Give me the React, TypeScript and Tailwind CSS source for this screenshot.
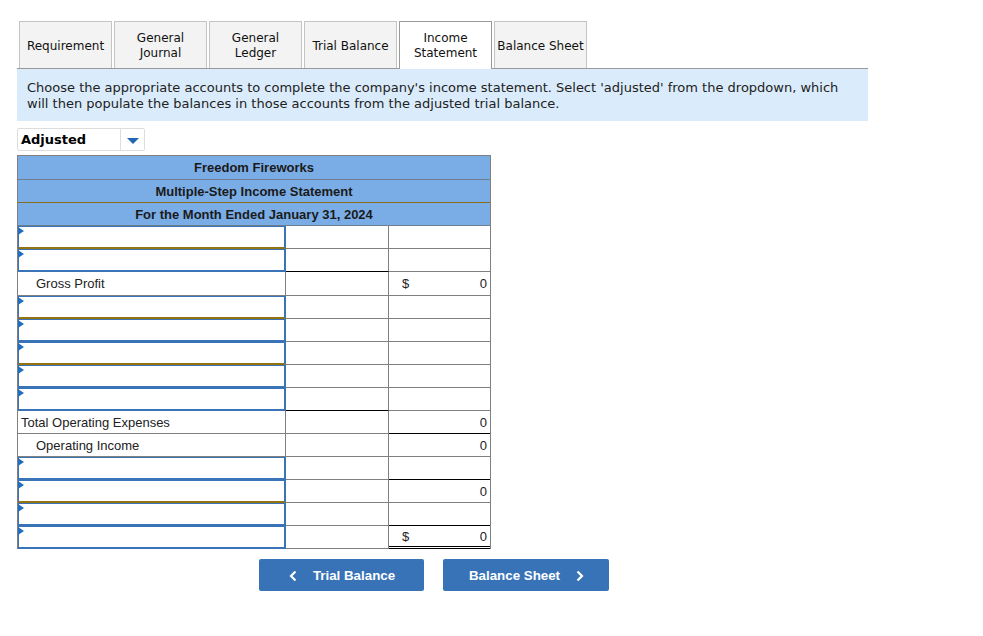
const tabs: [string, string?][] = [["Requirement"], ["General", "Journal"], ["General", "Ledger"], ["Trial Balance"], ["Income", "Statement"], ["Balance Sheet"]];

type Row = { h: string; label?: string; indent?: boolean; input?: boolean; gold?: boolean; midTop?: boolean; rightTop?: boolean; dollar?: boolean; zero?: boolean; last?: boolean };

const rows: Row[] = [
  { h: "h-[23px]", input: true, gold: true },
  { h: "h-[23px]", input: true },
  { h: "h-[24px]", label: "Gross Profit", indent: true, midTop: true, dollar: true, zero: true },
  { h: "h-[23px]", input: true, gold: true },
  { h: "h-[23px]", input: true },
  { h: "h-[23px]", input: true, gold: true },
  { h: "h-[23px]", input: true },
  { h: "h-[23px]", input: true },
  { h: "h-[23px]", label: "Total Operating Expenses", midTop: true, zero: true },
  { h: "h-[23px]", label: "Operating Income", indent: true, rightTop: true, zero: true },
  { h: "h-[23px]", input: true },
  { h: "h-[23px]", input: true, gold: true, rightTop: true, zero: true },
  { h: "h-[23px]", input: true },
  { h: "h-[23px]", input: true, rightTop: true, dollar: true, zero: true, last: true },
];

function Tab({ lines, active }: { lines: [string, string?]; active: boolean }) {
  return (
    <div className={active
      ? "w-[93px] h-[48px] pt-px -mb-px z-10 bg-white border border-b-0 border-[#999999] flex flex-col items-center justify-center leading-[15px]"
      : "w-[93px] h-[47px] pt-[2px] bg-[#f3f3f3] border border-b-0 border-[#c4c4c4] flex flex-col items-center justify-center leading-[15px]"}>
      {lines.map((l) => <span key={l} className="whitespace-nowrap">{l}</span>)}
    </div>
  );
}

function Header({ text, h, gold, pad }: { text: string; h: string; gold?: boolean; pad?: boolean }) {
  return (
    <div className={`${h} ${pad ? "pt-[2px]" : ""} flex items-center justify-center bg-[#7aade6] font-bold text-[#1a1a1a] border-b ${gold ? "border-[#8a6d1f]" : "border-[#6f7f8f]"}`}>
      {text}
    </div>
  );
}

function TableRow({ r }: { r: Row }) {
  return (
    <div className={`${r.h} flex border-b border-[#808080]`}>
      <div className="w-[268px] shrink-0 border-r border-[#808080] flex">
        {r.input ? (
          <div className={`relative z-10 w-[268px] shrink-0 -mb-px border-t border-l border-r-2 border-b-2 border-[#3a74b8] bg-white ${r.gold ? "border-b-[#94720f]" : ""}`}>
            <span className="absolute -left-px top-0 w-0 h-0 border-y-[4px] border-y-transparent border-l-[6px] border-l-[#1f6fc0]" />
          </div>
        ) : (
          <div className={`flex items-center ${r.h === "h-[23px]" ? "pt-[2px]" : ""} ${r.indent ? "pl-[18px]" : "pl-[3px]"}`}>{r.label}</div>
        )}
      </div>
      <div className={`w-[103px] shrink-0 border-r border-[#808080] -mt-px ${r.midTop ? "border-t border-t-black" : ""}`} />
      <div className={`flex-1 -mt-px flex items-center justify-between pl-[13px] pr-[3px] ${r.last ? "pt-px" : "pt-[2px]"} ${r.rightTop ? "border-t border-t-black" : ""} ${r.last ? "border-b-[3px] border-double border-b-black -mb-px" : ""}`}>
        <span>{r.dollar ? "$" : ""}</span>
        <span>{r.zero ? "0" : ""}</span>
      </div>
    </div>
  );
}

function NavButton({ children, w, pad }: { children: React.ReactNode; w: string; pad?: string }) {
  return (
    <button className={`${w} ${pad ?? ""} h-[32px] pt-[2px] rounded-[2px] bg-[#3873b8] text-white font-bold text-[13.33px] flex items-center justify-center gap-[15px]`}>
      {children}
    </button>
  );
}

const Left = () => (
  <svg width="10" height="12" viewBox="0 0 10 12" fill="none" stroke="white" strokeWidth="2.2"><path d="M7.5 1.5 3 6l4.5 4.5" /></svg>
);
const Right = () => (
  <svg width="10" height="12" viewBox="0 0 10 12" fill="none" stroke="white" strokeWidth="2.2"><path d="M2.5 1.5 7 6l-4.5 4.5" /></svg>
);

export default function App() {
  return (
    <div className="w-[983px] h-[636px] bg-white pt-[21px] pl-[17px] font-['DejaVu_Sans',sans-serif] text-[12px] text-[#111111] overflow-hidden">
      <div className="flex gap-[2px] pl-[2px] items-start h-[47px]">
        {tabs.map((t, i) => <Tab key={i} lines={t} active={i === 4} />)}
      </div>
      <div className="w-[851px] h-[53px] bg-[#daecfb] border-t border-[#999999] pl-[10px] pt-[11px] text-[13px] leading-[16px] text-[#222222] whitespace-nowrap">
        <p>Choose the appropriate accounts to complete the company's income statement. Select 'adjusted' from the dropdown, which</p>
        <p>will then populate the balances in those accounts from the adjusted trial balance.</p>
      </div>
      <div className="mt-[7px] w-[128px] h-[23px] flex border border-[#dddddd] rounded-[2px] bg-white">
        <div className="w-[103px] border-r border-[#dddddd] pl-[3px] font-bold text-[13px] leading-[21px] text-black">Adjusted</div>
        <div className="flex-1 flex items-center justify-center">
          <span className="w-0 h-0 border-x-[6px] border-x-transparent border-t-[6px] border-t-[#1f66b5] mt-[2px]" />
        </div>
      </div>
      <div className="mt-[4px] w-[474px] border border-[#808080] border-b-0 font-['Liberation_Sans',sans-serif] text-[13px] text-[#222222]">
        <Header text="Freedom Fireworks" h="h-[24px]" />
        <Header text="Multiple-Step Income Statement" h="h-[23px]" gold pad />
        <Header text="For the Month Ended January 31, 2024" h="h-[23px]" pad />
        {rows.map((r, i) => <TableRow key={i} r={r} />)}
      </div>
      <div className="mt-[10px] flex gap-[19px] pl-[242px] font-['Liberation_Sans',sans-serif]">
        <NavButton w="w-[165px]"><Left /><span>Trial Balance</span></NavButton>
        <NavButton w="w-[166px]" pad="pl-[2px]"><span>Balance Sheet</span><Right /></NavButton>
      </div>
    </div>
  );
}
